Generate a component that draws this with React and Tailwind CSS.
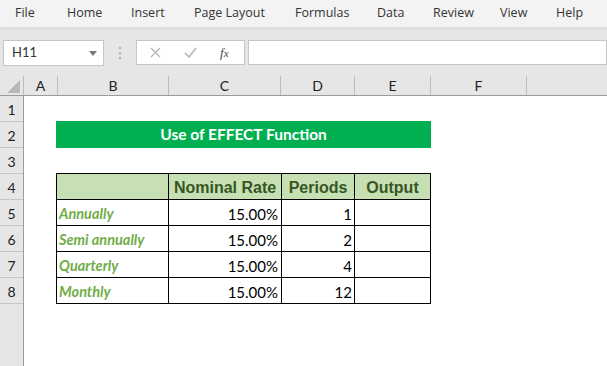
import React from "react";

const menu = [
  ["File", "w-[52px]"],
  ["Home", "w-[64px]"],
  ["Insert", "w-[63px]"],
  ["Page Layout", "w-[101px]"],
  ["Formulas", "w-[82px]"],
  ["Data", "w-[56px]"],
  ["Review", "w-[67px]"],
  ["View", "w-[56px]"],
  ["Help", "w-[40px]"],
];
const cols = [
  { l: "A", w: "w-[34px]" },
  { l: "B", w: "w-[111px]" },
  { l: "C", w: "w-[112px]" },
  { l: "D", w: "w-[74px]" },
  { l: "E", w: "w-[76px]" },
  { l: "F", w: "w-[96px]" },
];
const data = [
  ["Annually", "15.00%", "1"],
  ["Semi annually", "15.00%", "2"],
  ["Quarterly", "15.00%", "4"],
  ["Monthly", "15.00%", "12"],
];

export default function App() {
  return (
    <div className="w-[607px] h-[366px] overflow-hidden bg-white flex flex-col" style={{ fontFamily: "'Open Sans', sans-serif" }}>
      {/* menu */}
      <div className="h-[28px] shrink-0 bg-[#f3f3f3] flex items-center pl-[15px] text-[12.5px] text-[#333] border-b border-[#dedede] shadow-[0_1px_2px_rgba(0,0,0,0.08)] z-10">
        {menu.map(([m, w]) => (
          <span key={m} className={`${w} shrink-0`}>{m}</span>
        ))}
      </div>
      {/* formula bar */}
      <div className="h-[48px] shrink-0 bg-[#e6e6e6] flex items-start pt-[12px]">
        <div className="ml-[3px] w-[101px] h-[26px] bg-white border border-[#c6c6c6] flex items-center pl-[8px] pr-[6px] justify-between text-[13px] text-[#333]" style={{ fontFamily: "Lato, sans-serif" }}>
          <span>H11</span>
          <svg width="8" height="5" viewBox="0 0 8 5"><path d="M0 0h8L4 5z" fill="#777" /></svg>
        </div>
        <div className="w-[32px] h-[26px] flex flex-col items-center justify-center gap-[3px]">
          <span className="w-[2px] h-[2px] bg-[#b0b0b0]" />
          <span className="w-[2px] h-[2px] bg-[#b0b0b0]" />
          <span className="w-[2px] h-[2px] bg-[#b0b0b0]" />
        </div>
        <div className="w-[109px] h-[25px] bg-white border border-[#c6c6c6] flex items-center">
          <svg className="ml-[13px]" width="11" height="11" viewBox="0 0 11 11"><path d="M1 1l9 9M10 1l-9 9" stroke="#b5b5b5" strokeWidth="1.2" /></svg>
          <svg className="ml-[23px]" width="13" height="11" viewBox="0 0 13 11"><path d="M1 6l4 4 7-9" stroke="#b5b5b5" strokeWidth="1.6" fill="none" /></svg>
          <span className="ml-[23px] text-[13px] italic text-[#444]" style={{ fontFamily: "'Liberation Serif', serif" }}>f<span className="text-[11px]">x</span></span>
        </div>
        <div className="ml-[3px] flex-1 h-[25px] bg-white border border-[#c6c6c6]" />
      </div>
      {/* column headers */}
      <div className="h-[20px] shrink-0 bg-[#e6e6e6] flex border-b border-[#9b9b9b] text-[14px] text-[#222]" style={{ fontFamily: "Lato, sans-serif" }}>
        <div className="w-[24px] border-r border-[#bdbdbd] flex items-end justify-end pr-[3px] pb-[2px]">
          <svg width="13" height="13" viewBox="0 0 13 13"><path d="M13 0V13H0z" fill="#b8b8b8" /></svg>
        </div>
        {cols.map((c) => (
          <div key={c.l} className={`${c.w} border-r border-[#bdbdbd] flex items-center justify-center`}>{c.l}</div>
        ))}
        <div className="flex-1" />
      </div>
      {/* body */}
      <div className="flex flex-1">
        <div className="w-[24px] bg-[#e6e6e6] border-r border-[#9b9b9b] flex flex-col text-[14px] text-[#222]" style={{ fontFamily: "Lato, sans-serif" }}>
          {[1, 2, 3, 4, 5, 6, 7, 8].map((n) => (
            <div key={n} className="h-[26px] border-b border-[#c6c6c6] flex items-center justify-center pt-[2px]">{n}</div>
          ))}
        </div>
        <div className="flex-1 flex flex-col items-start">
          <div className="h-[25px]" />
          <div className="ml-[32px] w-[375px] h-[27px] bg-[#00b050] text-white font-bold text-[15.5px] flex items-center justify-center pt-[1px]" style={{ fontFamily: "Lato, sans-serif" }}>
            Use of EFFECT Function
          </div>
          <div className="h-[25px]" />
          <div className="ml-[32px] w-[375px] flex flex-col">
            <div className="flex h-[27px] border-t border-b border-black bg-[#c6e0b4] font-bold text-[16px] text-[#375623]" style={{ fontFamily: "'Liberation Sans', sans-serif" }}>
              <div className="w-[112px] border-l border-black" />
              <div className="w-[113px] border-l border-black flex items-center justify-center pt-[2px]">Nominal Rate</div>
              <div className="w-[73px] border-l border-black flex items-center justify-center pt-[2px]">Periods</div>
              <div className="w-[77px] border-l border-r border-black flex items-center justify-center pt-[2px]">Output</div>
            </div>
            {data.map((r) => (
              <div key={r[0]} className="flex h-[26px] border-b border-black text-[15px]" style={{ fontFamily: "Lato, sans-serif" }}>
                <div className="w-[112px] border-l border-black flex items-center pl-[2px] pt-[3px] font-bold italic text-[#70ad47] text-[14.5px]">{r[0]}</div>
                <div className="w-[113px] border-l border-black flex items-center justify-end pr-[3px] pt-[3px] text-black">{r[1]}</div>
                <div className="w-[73px] border-l border-black flex items-center justify-end pr-[2px] pt-[3px] text-black">{r[2]}</div>
                <div className="w-[77px] border-l border-r border-black" />
              </div>
            ))}
          </div>
        </div>
      </div>
    </div>
  );
}
